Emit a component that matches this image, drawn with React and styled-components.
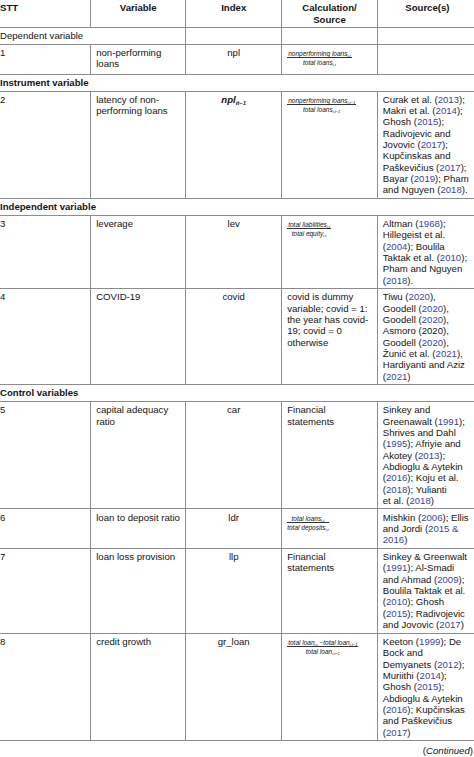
import React from "react";
import styled, { createGlobalStyle } from "styled-components";

const Global = createGlobalStyle`
  html, body { margin: 0; padding: 0; background: #fff; }
  body { width: 474px; height: 757px; overflow: hidden; font-family: "Liberation Sans", Arial, sans-serif; color: #141414; }
`;

const Page = styled.div`
  width: 474px;
  height: 757px;
  overflow: hidden;
  display: flex;
  flex-direction: column;
`;

const Table = styled.table`
  border-collapse: collapse;
  table-layout: fixed;
  width: 482px;
  margin: -1px 0 0 -5px;
  font-size: 9.6px;
  line-height: 11.35px;
`;

const HeadCell = styled.th`
  font-weight: 700;
  text-align: ${(p) => p.$align || "center"};
  vertical-align: top;
  padding: 2.2px 5px;
  border-top: 1px solid #8c8c8c;
  border-bottom: 1px solid #8c8c8c;
  border-left: ${(p) => (p.$first ? "none" : "1px solid #8c8c8c")};
`;

const Cell = styled.td`
  vertical-align: top;
  text-align: ${(p) => p.$align || "left"};
  padding: 2.2px 5px;
  height: ${(p) => (p.$h ? `${p.$h}px` : "auto")};
  box-sizing: border-box;
  border-bottom: 1px solid #8c8c8c;
  border-left: ${(p) => (p.$first ? "none" : "1px solid #8c8c8c")};
  font-weight: ${(p) => (p.$bold ? 700 : 400)};
`;

const Line = styled.span`
  display: block;
  white-space: nowrap;
`;

const Year = styled.span`
  color: #3a44a6;
`;

const IndexMath = styled.span`
  font-weight: 700;
  font-style: italic;
`;

const Sub = styled.sub`
  font-size: 0.62em;
  line-height: 0;
  vertical-align: -0.3em;
  font-weight: ${(p) => (p.$bold ? 600 : 400)};
`;

const Frac = styled.span`
  display: inline-flex;
  flex-direction: column;
  align-items: stretch;
  margin-top: 3px;
  font-style: italic;
  font-size: 6.5px;
  line-height: 7px;
  white-space: nowrap;
`;

const Num = styled.span`
  text-align: center;
  border-bottom: 0.7px solid #333;
  padding: 0 1px 0.5px;
`;

const Den = styled.span`
  text-align: center;
  padding-top: 0.8px;
`;

const Footer = styled.div`
  text-align: right;
  font-size: 9.6px;
  line-height: 11.3px;
  padding: 4px 1px 0 0;
`;

const Em = styled.em`
  font-style: italic;
`;

function Rich({ text }) {
  const parts = text.split(/\{([^}]*)\}/);
  return parts.map((p, i) => (i % 2 === 1 ? <Year key={i}>{p}</Year> : <React.Fragment key={i}>{p}</React.Fragment>));
}

function Lines({ lines }) {
  return lines.map((l, i) => (
    <Line key={i}>
      <Rich text={l} />
    </Line>
  ));
}

function Term({ t, s }) {
  return (
    <>
      {t}
      <Sub>{s}</Sub>
    </>
  );
}

const fracs = {
  npl: (
    <Frac>
      <Num><Term t="nonperforming loans" s="i,t" /></Num>
      <Den><Term t="total loans" s="i,t" /></Den>
    </Frac>
  ),
  npl1: (
    <Frac>
      <Num><Term t="nonperforming loans" s="i,t−1" /></Num>
      <Den><Term t="total loans" s="i,t−1" /></Den>
    </Frac>
  ),
  lev: (
    <Frac>
      <Num><Term t="total liabilities" s="i,t" /></Num>
      <Den><Term t="total equity" s="i,t" /></Den>
    </Frac>
  ),
  ldr: (
    <Frac>
      <Num><Term t="total loans" s="i,t" /></Num>
      <Den><Term t="total deposits" s="i,t" /></Den>
    </Frac>
  ),
  gr: (
    <Frac>
      <Num>
        <Term t="total loan" s="i,t" /> −total loan<Sub>i,t−1</Sub>
      </Num>
      <Den><Term t="total loan" s="i,t−1" /></Den>
    </Frac>
  ),
};

const rows = [
  { type: "dep", label: "Dependent variable" },
  { stt: "1", variable: ["non-performing", "loans"], index: "npl", calc: fracs.npl, src: [], h: 30 },
  { type: "section", label: "Instrument variable" },
  {
    stt: "2",
    variable: ["latency of non-", "performing loans"],
    index: (
      <IndexMath>
        npl<Sub $bold>it−1</Sub>
      </IndexMath>
    ),
    calc: fracs.npl1,
    src: [
      "Curak et al. ({2013});",
      "Makri et al. ({2014});",
      "Ghosh ({2015});",
      "Radivojevic and",
      "Jovovic ({2017});",
      "Kupčinskas and",
      "Paškevičius ({2017});",
      "Bayar ({2019}); Pham",
      "and Nguyen ({2018}).",
    ],
  },
  { type: "section", label: "Independent variable" },
  {
    stt: "3",
    variable: ["leverage"],
    index: "lev",
    calc: fracs.lev,
    src: ["Altman ({1968});", "Hillegeist et al.", "({2004}); Boulila", "Taktak et al. ({2010});", "Pham and Nguyen", "({2018})."],
  },
  {
    stt: "4",
    variable: ["COVID-19"],
    index: "covid",
    calc: ["covid is dummy", "variable; covid = 1:", "the year has covid-", "19; covid = 0", "otherwise"],
    src: [
      "Tiwu ({2020}),",
      "Goodell ({2020}),",
      "Goodell ({2020}),",
      "Asmoro (2020),",
      "Goodell ({2020}),",
      "Žunić et al. ({2021}),",
      "Hardiyanti and Aziz",
      "({2021})",
    ],
  },
  { type: "section", label: "Control variables" },
  {
    stt: "5",
    variable: ["capital adequacy", "ratio"],
    index: "car",
    calc: ["Financial", "statements"],
    src: [
      "Sinkey and",
      "Greenawalt ({1991});",
      "Shrives and Dahl",
      "({1995}); Afriyie and",
      "Akotey ({2013});",
      "Abdioglu & Aytekin",
      "({2016}); Koju et al.",
      "({2018}); Yulianti",
      "et al. ({2018})",
    ],
  },
  {
    stt: "6",
    variable: ["loan to deposit ratio"],
    index: "ldr",
    calc: fracs.ldr,
    src: ["Mishkin ({2006}); Ellis", "and Jordi ({2015 &}", "{2016})"],
  },
  {
    stt: "7",
    variable: ["loan loss provision"],
    index: "llp",
    calc: ["Financial", "statements"],
    src: [
      "Sinkey & Greenwalt",
      "({1991}); Al-Smadi",
      "and Ahmad ({2009});",
      "Boulila Taktak et al.",
      "({2010}); Ghosh",
      "({2015}); Radivojevic",
      "and Jovovic ({2017})",
    ],
  },
  {
    stt: "8",
    variable: ["credit growth"],
    index: "gr_loan",
    calc: fracs.gr,
    src: [
      "Keeton ({1999}); De",
      "Bock and",
      "Demyanets ({2012});",
      "Muriithi ({2014});",
      "Ghosh ({2015});",
      "Abdioglu & Aytekin",
      "({2016}); Kupčinskas",
      "and Paškevičius",
      "({2017})",
    ],
  },
];

export default function App() {
  return (
    <Page>
      <Global />
      <Table>
        <colgroup>
          <col style={{ width: "95.7px" }} />
          <col style={{ width: "95px" }} />
          <col style={{ width: "96px" }} />
          <col style={{ width: "95.6px" }} />
          <col style={{ width: "99.7px" }} />
        </colgroup>
        <thead>
          <tr>
            <HeadCell $first $align="left">STT</HeadCell>
            <HeadCell>Variable</HeadCell>
            <HeadCell>Index</HeadCell>
            <HeadCell>
              <Line>Calculation/</Line>
              <Line>Source</Line>
            </HeadCell>
            <HeadCell>Source(s)</HeadCell>
          </tr>
        </thead>
        <tbody>
          {rows.map((r, i) => {
            if (r.type === "dep") {
              return (
                <tr key={i}>
                  <Cell $first colSpan={2}>{r.label}</Cell>
                  <Cell />
                  <Cell />
                  <Cell />
                </tr>
              );
            }
            if (r.type === "section") {
              return (
                <tr key={i}>
                  <Cell $first $bold colSpan={5}>{r.label}</Cell>
                </tr>
              );
            }
            return (
              <tr key={i}>
                <Cell $first $h={r.h}>{r.stt}</Cell>
                <Cell>
                  <Lines lines={r.variable} />
                </Cell>
                <Cell $align="center">{r.index}</Cell>
                <Cell>{Array.isArray(r.calc) ? <Lines lines={r.calc} /> : r.calc}</Cell>
                <Cell>
                  <Lines lines={r.src} />
                </Cell>
              </tr>
            );
          })}
        </tbody>
      </Table>
      <Footer>
        (<Em>Continued</Em>)
      </Footer>
    </Page>
  );
}
